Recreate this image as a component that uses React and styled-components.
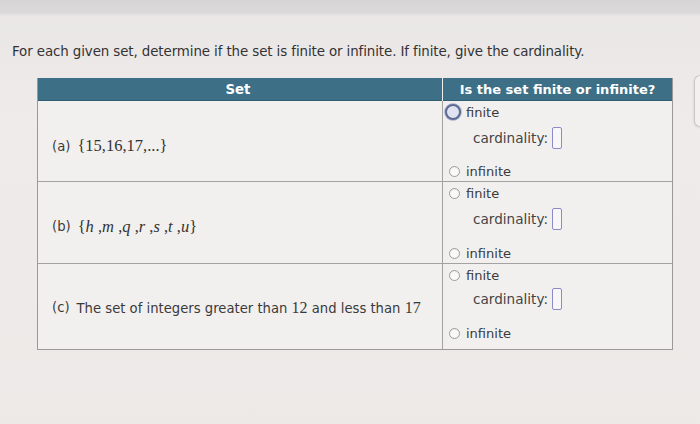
import React from "react";
import styled, { createGlobalStyle } from "styled-components";

const Global = createGlobalStyle`
  html, body { margin: 0; padding: 0; }
  body {
    width: 700px;
    height: 424px;
    overflow: hidden;
    background: linear-gradient(180deg, #d6d4d5 0px, #dcdadb 13px, #e9e6e6 16px, #efebea 120px, #ece9e7 424px);
    font-family: "DejaVu Sans", Verdana, sans-serif;
    color: #3a3a3a;
  }
`;

const Page = styled.div`
  padding: 43px 0 0 12px;
`;

const Prompt = styled.p`
  margin: 0;
  font-size: 13.4px;
  line-height: 18px;
  color: #333;
  letter-spacing: -0.1px;
  white-space: nowrap;
`;

const Row = styled.div`
  display: flex;
  align-items: flex-start;
  margin-top: 17px;
  margin-left: 25px;
`;

const Table = styled.div`
  width: 634px;
  flex-shrink: 0;
  border: 1px solid #9a9898;
  border-top: none;
  background: #f2f0ef;
  display: grid;
  grid-template-columns: 404px 1fr;
`;

const Head = styled.div`
  background: #3d6f87;
  color: #fff;
  font-weight: bold;
  font-size: ${p => (p.$split ? 13 : 13.3)}px;
  height: 23px;
  display: flex;
  align-items: center;
  justify-content: center;
  padding-right: ${p => (p.$split ? 0 : 4)}px;
  border-left: ${p => (p.$split ? "1px solid #f0eeee" : "none")};
  box-shadow: inset 0 -1px 0 #2f5d72;
`;

const SetCell = styled.div`
  height: ${p => p.$h}px;
  display: flex;
  align-items: center;
  padding: ${p => p.$pt}px 0 0 14px;
  box-sizing: border-box;
  font-size: 13.2px;
  color: #3a3a3a;
  white-space: nowrap;
  border-top: ${p => (p.$first ? "none" : "1px solid #a3a1a1")};
`;

const Math = styled.span`
  font-family: "Liberation Serif", "Times New Roman", serif;
  font-size: 16.5px;
  margin-left: 7px;
  color: #333;
`;

const Var = styled.i`
  font-style: italic;
`;

const Plain = styled.span`
  margin-left: 7px;
`;

const Num = styled.span`
  font-family: "Liberation Serif", "Times New Roman", serif;
  font-size: 16px;
`;

const AnswerCell = styled.div`
  height: ${p => p.$h}px;
  box-sizing: border-box;
  border-left: 1px solid #a3a1a1;
  border-top: ${p => (p.$first ? "none" : "1px solid #a3a1a1")};
  display: flex;
  flex-direction: column;
  justify-content: space-between;
  padding: 1px 0 ${p => p.$pb}px 0;
`;

const Option = styled.label`
  display: flex;
  align-items: center;
  font-size: 13px;
  color: #3a3a3a;
  height: 20px;
`;

const Radio = styled.span`
  box-sizing: border-box;
  flex-shrink: 0;
  width: ${p => (p.$on ? 16 : 11)}px;
  height: ${p => (p.$on ? 16 : 11)}px;
  margin-left: ${p => (p.$on ? 2 : 6)}px;
  margin-right: ${p => (p.$on ? 5 : 6)}px;
  border-radius: 50%;
  border: ${p => (p.$on ? "2.5px solid #5d6a93" : "1px solid #9c9a9a")};
  background: ${p => (p.$on ? "#dfe3ef" : "#fbfafa")};
  box-shadow: ${p => (p.$on ? "0 0 0 1px #b4bbd4" : "inset 0 1px 1px rgba(0,0,0,0.06)")};
`;

const CardLine = styled.div`
  display: flex;
  align-items: center;
  gap: 4px;
  padding-left: 30px;
  font-size: 13.6px;
  color: #444;
  margin-top: ${p => p.$mt}px;
`;

const Box = styled.span`
  display: inline-block;
  width: 10px;
  height: 22px;
  box-sizing: border-box;
  border: 1.5px solid #8d8ac6;
  border-radius: 2px;
  background: #f7f6f8;
`;

const SideButton = styled.div`
  margin-left: 21px;
  margin-top: -3px;
  width: 8px;
  height: 50px;
  flex-shrink: 0;
  border: 1.5px solid #c9c7c7;
  border-right: none;
  border-radius: 6px 0 0 6px;
  background: #f3f1f0;
  box-shadow: -1px 1px 2px rgba(0,0,0,0.06);
`;

const rows = [
  {
    h: 80,
    pt: 10,
    pb: 0,
    cardTop: 5,
    label: "(a)",
    content: <Math>{"{"}15,16,17,...{"}"}</Math>,
    selected: true,
  },
  {
    h: 82,
    pt: 8,
    pb: 0,
    cardTop: 5,
    label: "(b)",
    content: (
      <Math>
        {"{"}
        <Var>h</Var> ,<Var>m</Var> ,<Var>q</Var> ,<Var>r</Var> ,<Var>s</Var> ,<Var>t</Var> ,<Var>u</Var>
        {"}"}
      </Math>
    ),
  },
  {
    h: 86,
    pt: 2,
    pb: 6,
    cardTop: 3,
    label: "(c)",
    content: (
      <Plain>
        The set of integers greater than <Num>12</Num> and less than <Num>17</Num>
      </Plain>
    ),
  },
];

export default function App() {
  return (
    <Page>
      <Global />
      <Prompt>For each given set, determine if the set is finite or infinite. If finite, give the cardinality.</Prompt>
      <Row>
        <Table>
          <Head>Set</Head>
          <Head $split>Is the set finite or infinite?</Head>
          {rows.map((r, i) => (
            <React.Fragment key={r.label}>
              <SetCell $h={r.h} $pt={r.pt} $first={i === 0}>
                {r.label}
                {r.content}
              </SetCell>
              <AnswerCell $h={r.h} $pb={r.pb} $first={i === 0}>
                <div>
                  <Option>
                    <Radio $on={r.selected} />
                    finite
                  </Option>
                  <CardLine $mt={r.cardTop}>
                    cardinality: <Box />
                  </CardLine>
                </div>
                <Option>
                  <Radio />
                  infinite
                </Option>
              </AnswerCell>
            </React.Fragment>
          ))}
        </Table>
        <SideButton />
      </Row>
    </Page>
  );
}
